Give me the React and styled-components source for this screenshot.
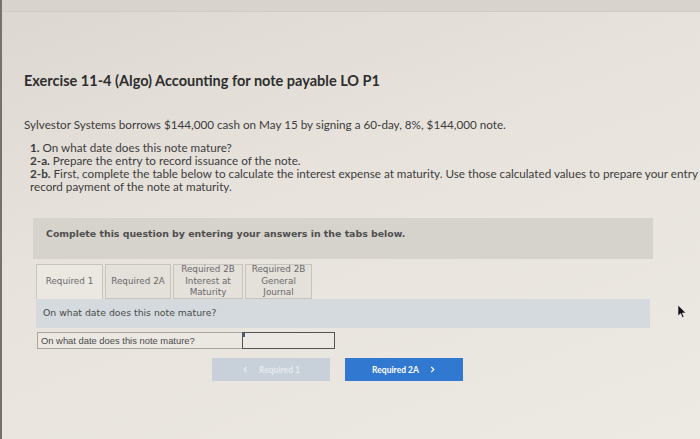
import React from 'react';
import styled, { createGlobalStyle } from 'styled-components';

const GlobalStyle = createGlobalStyle`
  html, body {
    margin: 0;
    padding: 0;
    width: 700px;
    height: 439px;
    overflow: hidden;
  }
  body {
    background: linear-gradient(160deg, #dcd7d1 0%, #e7e3dc 40%, #ede9e3 100%);
    font-family: "Lato", "Liberation Sans", sans-serif;
    color: #3c3c3c;
  }
`;

const Screen = styled.div`
  position: relative;
  width: 700px;
  height: 439px;
  border-left: 2px solid #76716c;
  box-sizing: border-box;
  overflow: hidden;
`;

const TopRule = styled.div`
  height: 11px;
  border-bottom: 1px solid #d0cbc5;
  background: #d8d3cd;
`;

const Content = styled.div`
  padding-left: 22px;
`;

const Title = styled.h1`
  margin: 60px 0 0;
  font-size: 14.5px;
  line-height: 18px;
  font-weight: 700;
  color: #2e2e2e;
  white-space: nowrap;
`;

const Intro = styled.p`
  margin: 27px 0 0;
  font-size: 11.7px;
  line-height: 14px;
  white-space: nowrap;
`;

const Steps = styled.div`
  margin: 10px 0 0 6px;
  font-size: 11.7px;
  line-height: 13px;
  white-space: nowrap;

  b {
    font-weight: 700;
  }
`;

const Panel = styled.div`
  margin: 25px 0 0 9px;
  width: 620px;
`;

const Notice = styled.div`
  height: 41px;
  box-sizing: border-box;
  padding: 10px 13px;
  background: #d6d2cc;
  font-family: "DejaVu Sans", sans-serif;
  font-weight: 700;
  font-size: 9.4px;
  color: #4e4e4e;
`;

const Work = styled.div`
  margin: 5px 0 0 3px;
  width: 614px;
`;

const Tabs = styled.div`
  display: flex;
  align-items: flex-end;
  gap: 2px;
  height: 35px;
`;

const Tab = styled.div`
  display: flex;
  align-items: center;
  justify-content: center;
  text-align: center;
  width: ${(p) => p.$w}px;
  height: 35px;
  box-sizing: border-box;
  border: 1px solid #c7c3bd;
  border-bottom: ${(p) => (p.$active ? 'none' : '1px solid #c7c3bd')};
  background: ${(p) => (p.$active ? '#ebe8e2' : '#e4e0da')};
  font-family: "DejaVu Sans", sans-serif;
  font-size: 8.8px;
  line-height: 11.5px;
  color: #6a6a6a;
`;

const QuestionBar = styled.div`
  height: 29px;
  box-sizing: border-box;
  padding: 8px 7px;
  background: #d4dadd;
  font-family: "DejaVu Sans", sans-serif;
  font-size: 9.3px;
  color: #4a4a4a;
`;

const AnswerRow = styled.div`
  display: flex;
  margin: 4px 0 0 1px;
  width: 298px;
  height: 17px;
`;

const AnswerLabel = styled.div`
  width: 205px;
  box-sizing: border-box;
  border: 1px solid #a9a49e;
  border-right: none;
  padding: 2px 3px;
  font-family: "Liberation Sans", Arial, sans-serif;
  font-size: 9.4px;
  color: #4a4a4a;
  background: #ebe8e2;
`;

const AnswerInput = styled.div`
  position: relative;
  flex: 1;
  box-sizing: border-box;
  border: 1px solid #55524f;
  background: #ece9e4;

  &::before {
    content: '';
    position: absolute;
    left: 0;
    top: 0;
    width: 2px;
    height: 4px;
    background: #3b5e8f;
  }
`;

const Nav = styled.div`
  display: flex;
  gap: 15px;
  margin: 9px 0 0 176px;
`;

const NavButton = styled.div`
  display: flex;
  align-items: center;
  justify-content: center;
  gap: 10px;
  width: 118px;
  height: 23px;
  background: ${(p) => (p.$disabled ? '#c8d1d9' : '#3178d0')};
  color: ${(p) => (p.$disabled ? '#e6eaee' : '#ffffff')};
  font-family: "Lato", sans-serif;
  font-weight: 700;
  font-size: 8.5px;

  svg {
    width: 7px;
    height: 7px;
  }
`;

const Cursor = styled.svg`
  position: absolute;
  left: 675px;
  top: 304px;
  width: 10px;
  height: 15px;
`;

const Chevron = ({ dir }) => (
  <svg viewBox="0 0 8 8">
    <path
      d={dir === 'left' ? 'M5.5 1 L2.5 4 L5.5 7' : 'M2.5 1 L5.5 4 L2.5 7'}
      fill="none"
      stroke="currentColor"
      strokeWidth="1.4"
    />
  </svg>
);

export default function App() {
  return (
    <>
      <GlobalStyle />
      <Screen>
        <TopRule />
        <Content>
          <Title>Exercise 11-4 (Algo) Accounting for note payable LO P1</Title>
          <Intro>
            Sylvestor Systems borrows $144,000 cash on May 15 by signing a 60-day, 8%, $144,000 note.
          </Intro>
          <Steps>
            <b>1.</b> On what date does this note mature?
            <br />
            <b>2-a.</b> Prepare the entry to record issuance of the note.
            <br />
            <b>2-b.</b> First, complete the table below to calculate the interest expense at maturity. Use those calculated values to prepare your entry
            <br />
            record payment of the note at maturity.
          </Steps>
          <Panel>
            <Notice>Complete this question by entering your answers in the tabs below.</Notice>
            <Work>
              <Tabs>
                <Tab $w={67} $active>Required 1</Tab>
                <Tab $w={66}>Required 2A</Tab>
                <Tab $w={70}>
                  Required 2B
                  <br />
                  Interest at
                  <br />
                  Maturity
                </Tab>
                <Tab $w={67}>
                  Required 2B
                  <br />
                  General
                  <br />
                  Journal
                </Tab>
              </Tabs>
              <QuestionBar>On what date does this note mature?</QuestionBar>
              <AnswerRow>
                <AnswerLabel>On what date does this note mature?</AnswerLabel>
                <AnswerInput />
              </AnswerRow>
              <Nav>
                <NavButton $disabled>
                  <Chevron dir="left" />
                  Required 1
                </NavButton>
                <NavButton>
                  Required 2A
                  <Chevron dir="right" />
                </NavButton>
              </Nav>
            </Work>
          </Panel>
        </Content>
        <Cursor viewBox="0 0 10 15">
          <path d="M1 1 L1 12 L3.6 9.6 L5.4 13.6 L7 12.9 L5.3 9 L8.8 9 Z" fill="#111" stroke="#eee" strokeWidth="0.6" />
        </Cursor>
      </Screen>
    </>
  );
}
